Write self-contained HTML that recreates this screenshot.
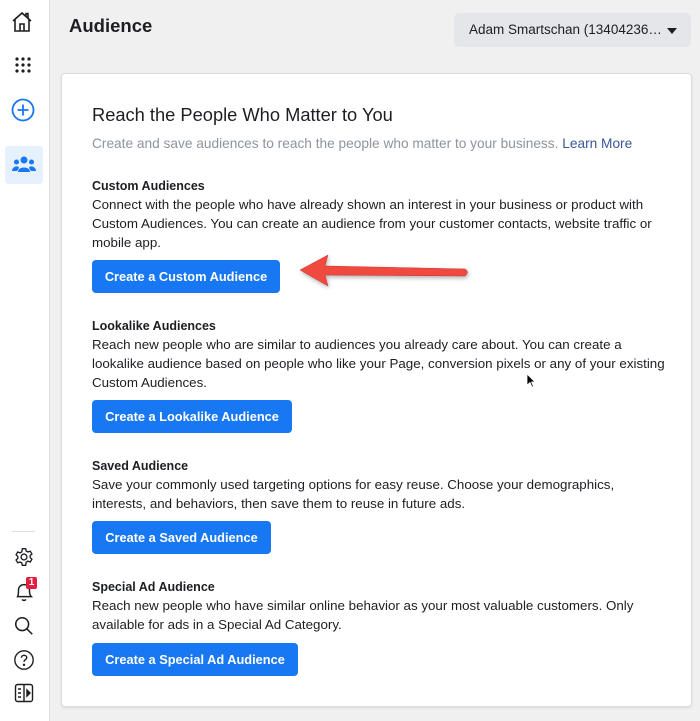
<!DOCTYPE html>
<html><head><style>
*{margin:0;padding:0;box-sizing:border-box}
body{width:700px;height:721px;background:#f0f0f0;font-family:"Liberation Sans",Arial,sans-serif;position:relative;overflow:hidden;color:#1c1e21}
.side{position:absolute;left:0;top:0;width:50px;height:721px;background:#fff;border-right:1px solid #ddd}
.a{position:absolute;white-space:nowrap}
.card{position:absolute;left:61px;top:73px;width:631px;height:634px;background:#fff;border:1px solid #dadde1;border-radius:4px;box-shadow:0 1px 2px rgba(0,0,0,.1)}
.h{font-size:12.5px;font-weight:bold;color:#1c1e21}
.p{font-size:13.35px;color:#1c1e21;line-height:19px}
.btn{position:absolute;left:92px;height:33px;background:#1877f2;border-radius:4px;color:#fff;font-weight:bold;font-size:12.8px;line-height:33px;text-align:center}
</style></head><body>
<div class="side">
<svg class="a" style="left:10px;top:10px" width="24" height="24" viewBox="0 0 24 24" fill="none" stroke="#1c1e21" stroke-width="1.6"><path d="M3 11 L12 3 L21 11 M5 9.5 V21 H19 V9.5 M10 21 V14 H14 V21 M16 6 V3.5 H18 V8"/></svg>
<svg class="a" style="left:14px;top:56px" width="18" height="18" viewBox="0 0 18 18" fill="#1c1e21"><circle cx="3" cy="3" r="1.6"/><circle cx="9" cy="3" r="1.6"/><circle cx="15" cy="3" r="1.6"/><circle cx="3" cy="9" r="1.6"/><circle cx="9" cy="9" r="1.6"/><circle cx="15" cy="9" r="1.6"/><circle cx="3" cy="15" r="1.6"/><circle cx="9" cy="15" r="1.6"/><circle cx="15" cy="15" r="1.6"/></svg>
<svg class="a" style="left:11px;top:98px" width="24" height="24" viewBox="0 0 24 24" fill="none" stroke="#1877f2" stroke-width="1.8"><circle cx="12" cy="12" r="10.5"/><path d="M12 6.5V17.5M6.5 12H17.5"/></svg>
<div class="a" style="left:5px;top:146px;width:38px;height:38px;background:#e7f0fd;border-radius:4px"></div>
<svg class="a" style="left:12px;top:155px" width="24" height="20" viewBox="0 0 24 20" fill="#1877f2"><circle cx="12" cy="5" r="3.5"/><circle cx="4.5" cy="7" r="2.5"/><circle cx="19.5" cy="7" r="2.5"/><path d="M6 17 C6 11 18 11 18 17Z"/><path d="M0 16 C0 11 7 10 7 13 L5 16Z"/><path d="M24 16 C24 11 17 10 17 13 L19 16Z"/></svg>
<div class="a" style="left:12px;top:531px;width:23px;height:1px;background:#ddd"></div>
<svg class="a" style="left:14px;top:547px" width="20" height="20" viewBox="0 0 24 24" fill="none" stroke="#1c1e21" stroke-width="1.6"><circle cx="12" cy="12" r="3.5"/><path d="M10 2h4l.6 2.8 2.2 1.2 2.7-1 2 3.4-2.1 1.9v2.4l2.1 1.9-2 3.4-2.7-1-2.2 1.2L14 22h-4l-.6-2.8-2.2-1.2-2.7 1-2-3.4 2.1-1.9v-2.4L2.5 9.4l2-3.4 2.7 1 2.2-1.2z"/></svg>
<svg class="a" style="left:13px;top:581px" width="22" height="22" viewBox="0 0 24 24" fill="none" stroke="#1c1e21" stroke-width="1.6"><path d="M5 17 C6 15 6 13 6 10 C6 6 9 4 12 4 C15 4 18 6 18 10 C18 13 18 15 20 17Z M10 20 C10.5 21.5 13.5 21.5 14 20"/></svg>
<div class="a" style="left:26px;top:577px;width:11px;height:12px;background:#e41e3f;border-radius:2px;color:#fff;font-size:10px;font-weight:bold;text-align:center;line-height:12px">1</div>
<svg class="a" style="left:13px;top:615px" width="22" height="22" viewBox="0 0 24 24" fill="none" stroke="#1c1e21" stroke-width="1.7"><circle cx="10" cy="10" r="7"/><path d="M15 15L21 21"/></svg>
<svg class="a" style="left:13px;top:649px" width="22" height="22" viewBox="0 0 24 24" fill="none" stroke="#1c1e21" stroke-width="1.5"><circle cx="12" cy="12" r="10"/><path d="M9.2 9.5C9.2 6 15 6 15 9.5C15 11.5 12 11.5 12 14"/><circle cx="12" cy="17.3" r=".6" fill="#1c1e21"/></svg>
<svg class="a" style="left:14px;top:683px" width="20" height="20" viewBox="0 0 20 20" fill="none" stroke="#1c1e21" stroke-width="1.4"><rect x="1.5" y="1.5" width="17" height="17" rx="2"/><path d="M10 1.5V18.5M4 6H7M4 10H7M4 14H7"/><path d="M13 7L16 10L13 13Z" fill="#1c1e21"/></svg>
</div>
<div class="a" style="left:69px;top:15px;font-size:18.5px;font-weight:bold">Audience</div>
<div class="a" style="left:454px;top:13px;width:237px;height:34px;background:#e4e6e9;border-radius:5px"></div>
<div class="a" style="left:469px;top:22px;font-size:13.5px;color:#1c1e21">Adam Smartschan (13404236…</div>
<svg class="a" style="left:667px;top:28px" width="10" height="6"><path d="M0 0H10L5 6Z" fill="#1c1e21"/></svg>
<div class="card"></div>
<div class="a" style="left:92px;top:104px;font-size:18.3px;color:#1c1e21">Reach the People Who Matter to You</div>
<div class="a" style="left:92px;top:136px;font-size:13.7px;color:#8d949e">Create and save audiences to reach the people who matter to your business. <span style="color:#385898">Learn More</span></div>
<div class="a h" style="left:92px;top:179px">Custom Audiences</div>
<div class="a p" style="left:92px;top:195px">Connect with the people who have already shown an interest in your business or product with<br>Custom Audiences. You can create an audience from your customer contacts, website traffic or<br>mobile app.</div>
<div class="btn" style="top:260px;width:188px">Create a Custom Audience</div>
<div class="a h" style="left:92px;top:319px">Lookalike Audiences</div>
<div class="a p" style="left:92px;top:335px">Reach new people who are similar to audiences you already care about. You can create a<br>lookalike audience based on people who like your Page, conversion pixels or any of your existing<br>Custom Audiences.</div>
<div class="btn" style="top:400px;width:200px">Create a Lookalike Audience</div>
<div class="a h" style="left:92px;top:459px">Saved Audience</div>
<div class="a p" style="left:92px;top:475px">Save your commonly used targeting options for easy reuse. Choose your demographics,<br>interests, and behaviors, then save them to reuse in future ads.</div>
<div class="btn" style="top:521px;width:179px">Create a Saved Audience</div>
<div class="a h" style="left:92px;top:580px">Special Ad Audience</div>
<div class="a p" style="left:92px;top:596px">Reach new people who have similar online behavior as your most valuable customers. Only<br>available for ads in a Special Ad Category.</div>
<div class="btn" style="top:643px;width:206px">Create a Special Ad Audience</div>
<svg class="a" style="left:295px;top:250px" width="180" height="40" viewBox="0 0 180 40"><path d="M5 20 L33 5 L30 16 L170 19 Q175 22 170 26 L30 25 L33 36 Z" fill="#f0493e" stroke="#c33" stroke-width=".5" style="filter:drop-shadow(1px 2px 2px rgba(0,0,0,.3))"/></svg>
<svg class="a" style="left:526px;top:373px" width="10" height="15" viewBox="0 0 10 15"><path d="M1 1V12L4 9.5L6 14L7.5 13.3L5.5 9H9Z" fill="#000" stroke="#fff" stroke-width=".8"/></svg>
</body></html>
